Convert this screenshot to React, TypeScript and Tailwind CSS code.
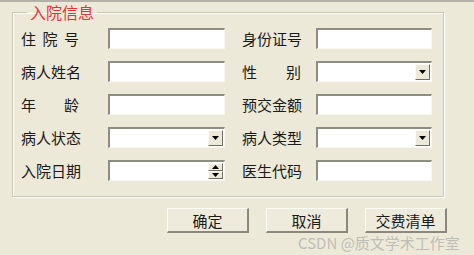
import React from "react";

const font = { fontFamily: '"Noto Sans CJK SC", "Noto Sans", sans-serif' };

function Label({ text, className = "" }: { text: string; className?: string }) {
  const chars = text.split("");
  return (
    <div className={`flex h-[21px] items-center justify-between text-[15px] leading-none text-[#1a1a1a] ${className}`}>
      {chars.map((c, i) => (
        <span key={i}>{c}</span>
      ))}
    </div>
  );
}

function Sunken({ className = "", children }: { className?: string; children?: React.ReactNode }) {
  return (
    <div
      className={`relative h-[21px] bg-white border-t-2 border-l-2 border-t-[#8e8d84] border-l-[#8e8d84] border-b border-r border-b-[#f7f6f0] border-r-[#f7f6f0] ${className}`}
    >
      {children}
    </div>
  );
}

function Arrow({ up = false }: { up?: boolean }) {
  return (
    <svg width="7" height="4" viewBox="0 0 7 4">
      {up ? <path d="M0 4 L7 4 L3.5 0 Z" fill="#000" /> : <path d="M0 0 L7 0 L3.5 4 Z" fill="#000" />}
    </svg>
  );
}

function Combo({ className = "" }: { className?: string }) {
  return (
    <Sunken className={className}>
      <div className="absolute right-[1px] top-[1px] flex h-[16px] w-[15px] items-center justify-center bg-[#ece9d8] border-t border-l border-t-[#fbfaf5] border-l-[#fbfaf5] border-b border-r border-b-[#716f64] border-r-[#716f64]">
        <Arrow />
      </div>
    </Sunken>
  );
}

function Spin({ className = "" }: { className?: string }) {
  return (
    <Sunken className={className}>
      <div className="absolute right-[1px] top-[1px] flex h-[16px] w-[15px] flex-col">
        <div className="flex flex-1 items-center justify-center bg-[#ece9d8] border-t border-l border-t-[#fbfaf5] border-l-[#fbfaf5] border-b border-r border-b-[#716f64] border-r-[#716f64]">
          <Arrow up />
        </div>
        <div className="flex flex-1 items-center justify-center bg-[#ece9d8] border-t border-l border-t-[#fbfaf5] border-l-[#fbfaf5] border-b border-r border-b-[#716f64] border-r-[#716f64]">
          <Arrow />
        </div>
      </div>
    </Sunken>
  );
}

function Button({ text }: { text: string }) {
  return (
    <button className="flex h-[25px] w-[82px] items-center justify-center bg-[#eeebdd] text-[15px] leading-none text-[#1a1a1a] border-t border-l border-t-[#fdfcf7] border-l-[#fdfcf7] border-b-2 border-r-2 border-b-[#8a887c] border-r-[#8a887c]">
      {text}
    </button>
  );
}

type Field = { label: string; kind: "text" | "combo" | "spin" };

const rows: [Field, Field][] = [
  [{ label: "住院号", kind: "text" }, { label: "身份证号", kind: "text" }],
  [{ label: "病人姓名", kind: "text" }, { label: "性别", kind: "combo" }],
  [{ label: "年龄", kind: "text" }, { label: "预交金额", kind: "text" }],
  [{ label: "病人状态", kind: "combo" }, { label: "病人类型", kind: "combo" }],
  [{ label: "入院日期", kind: "spin" }, { label: "医生代码", kind: "text" }],
];

function Input({ field, className }: { field: Field; className: string }) {
  if (field.kind === "combo") return <Combo className={className} />;
  if (field.kind === "spin") return <Spin className={className} />;
  return <Sunken className={className} />;
}

export default function App() {
  return (
    <div className="relative h-[255px] w-[474px] overflow-hidden bg-[#ece9d8] border-t-2 border-t-[#b4b2a8]" style={font}>
      <fieldset className="ml-[12px] mt-[1px] w-[432px] border border-[#c9c6b4] px-[8px] pb-[15px] pt-[7px] shadow-[inset_1px_1px_0_#ffffff,1px_1px_0_#ffffff]">
        <legend className="ml-[6px] px-[3px] text-[16px] leading-[18px] text-[#e8333a]">入院信息</legend>
        <div className="flex flex-col gap-[12px]">
          {rows.map(([a, b], i) => (
            <div key={i} className="flex items-center">
              <Label text={a.label} className="w-[58px]" />
              <Input field={a} className="ml-[29px] w-[117px]" />
              <Label text={b.label} className="ml-[17px] w-[59px]" />
              <Input field={b} className="ml-[15px] w-[116px]" />
            </div>
          ))}
        </div>
      </fieldset>
      <div className="ml-[167px] mt-[11px] flex gap-[17px]">
        <Button text="确定" />
        <Button text="取消" />
        <Button text="交费清单" />
      </div>
      <div className="absolute left-[298px] top-[233px] text-[15px] leading-none text-[#b9b8b2]/90">
        CSDN @质文学术工作室
      </div>
    </div>
  );
}
